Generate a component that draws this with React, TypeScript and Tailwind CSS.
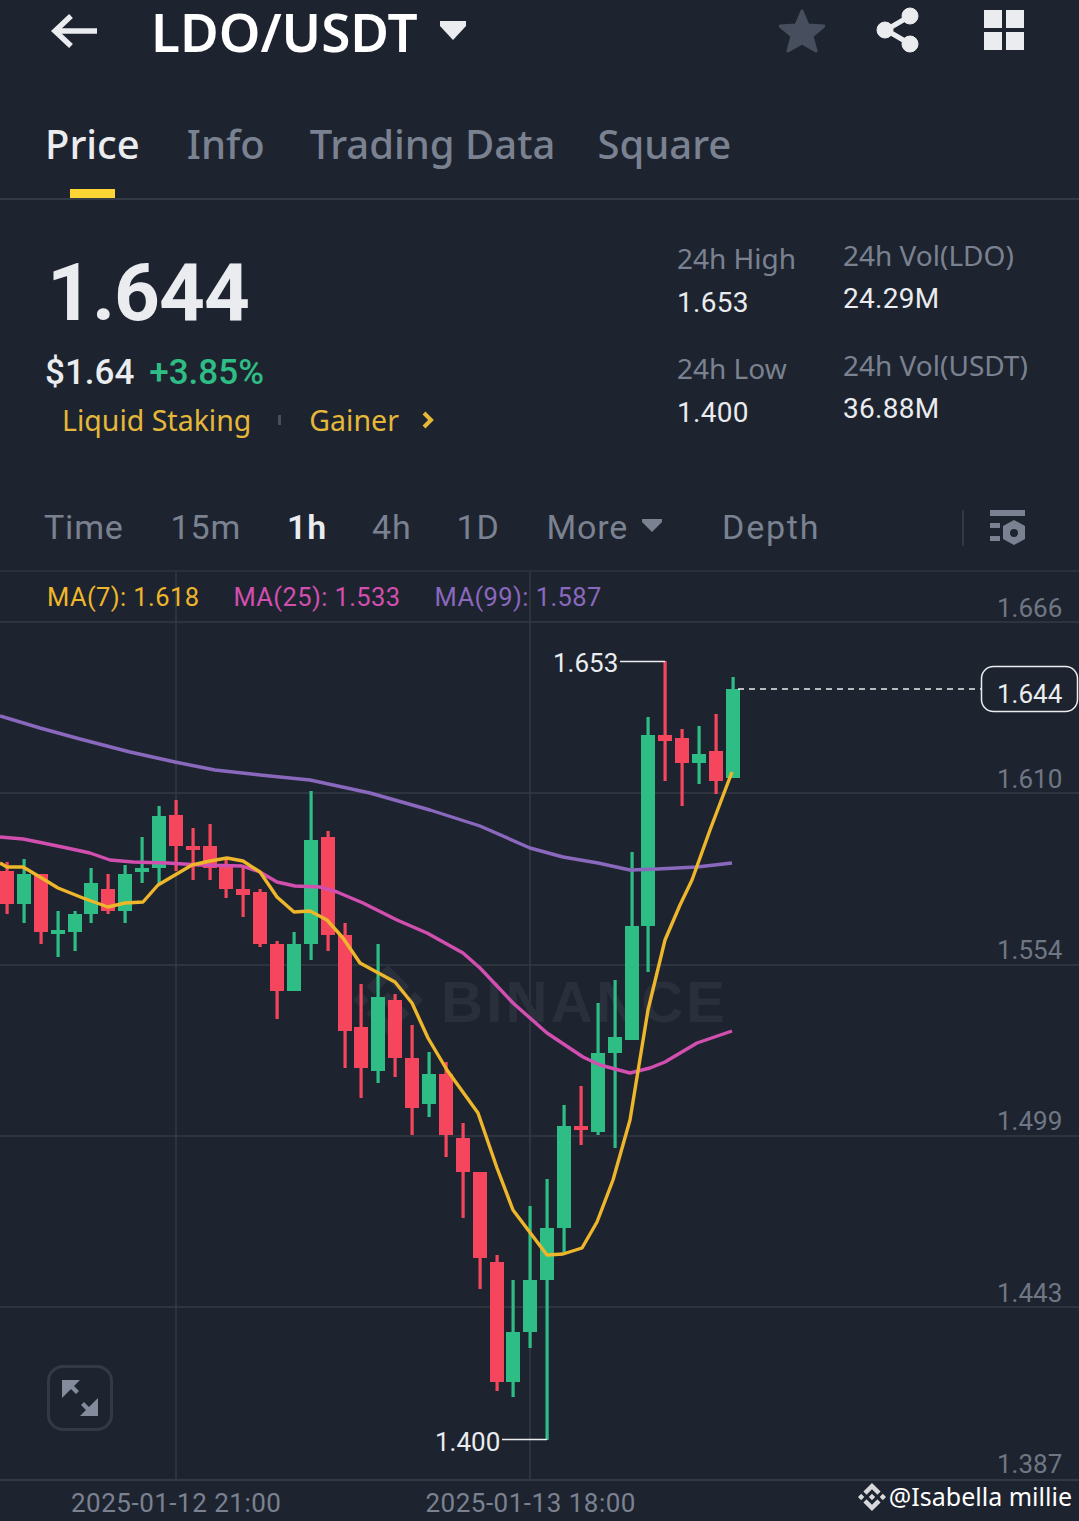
import React from 'react';
import { SiBinance } from 'react-icons/si';

const GREEN = '#2ebd85';
const RED = '#f6465d';

// [body top, body bottom, wick top, wick bottom, up?]
const candles: [number, number, number, number, boolean][] = [
  [871, 904, 862, 914, false],
  [874, 904, 859, 923, true],
  [874, 932, 874, 944, false],
  [930, 932, 911, 957, true],
  [914, 932, 911, 951, true],
  [883, 914, 868, 923, true],
  [889, 911, 874, 914, false],
  [874, 911, 865, 923, true],
  [868, 871, 837, 883, true],
  [816, 868, 806, 883, true],
  [815, 846, 800, 871, false],
  [846, 849, 828, 880, false],
  [846, 868, 824, 880, false],
  [865, 889, 858, 898, false],
  [889, 895, 865, 917, false],
  [892, 944, 889, 947, false],
  [944, 991, 941, 1019, false],
  [944, 991, 932, 991, true],
  [840, 944, 791, 960, true],
  [837, 935, 831, 951, false],
  [935, 1031, 923, 1068, false],
  [1027, 1068, 984, 1098, false],
  [997, 1071, 944, 1083, true],
  [1000, 1058, 994, 1077, false],
  [1058, 1108, 1025, 1135, false],
  [1074, 1104, 1052, 1117, true],
  [1074, 1135, 1062, 1157, false],
  [1138, 1172, 1123, 1218, false],
  [1172, 1258, 1172, 1289, false],
  [1262, 1382, 1255, 1391, false],
  [1332, 1382, 1280, 1397, true],
  [1280, 1332, 1206, 1348, true],
  [1228, 1280, 1179, 1440, true],
  [1126, 1228, 1105, 1252, true],
  [1126, 1130, 1086, 1145, false],
  [1053, 1132, 1003, 1135, true],
  [1037, 1053, 980, 1148, true],
  [926, 1040, 852, 1040, true],
  [735, 926, 717, 972, true],
  [735, 741, 661, 781, false],
  [738, 763, 729, 806, false],
  [754, 763, 726, 784, true],
  [751, 781, 714, 794, false],
  [689, 778, 677, 778, true],
];

const ma7 =
  '0,863 7,867 23,867 40,877 58,888 83,898 108,907 125,903 143,902 158,885 192,865 210,861 227,858 243,861 260,872 277,897 294,912 310,911 327,920 343,938 360,963 395,982 412,1003 428,1038 447,1070 478,1113 497,1168 513,1210 547,1255 563,1254 582,1248 597,1222 613,1180 630,1120 648,1010 665,940 680,905 692,880 710,830 732,772';
const ma25 =
  '0,837 23,839 43,843 67,848 90,853 110,860 133,862 167,863 200,865 242,866 260,872 277,882 295,886 320,887 337,892 363,903 397,920 427,933 463,953 480,968 513,1003 547,1033 583,1057 600,1065 630,1073 650,1068 665,1062 697,1043 732,1031';
const ma99 =
  '0,716 40,728 80,739 130,752 175,762 215,770 260,775 310,780 370,793 430,810 480,826 530,848 563,857 598,863 630,870 657,869 697,867 732,863';

const gridY = [622, 793, 965, 1136, 1307];
const axis: [string, number][] = [
  ['1.666', 617],
  ['1.610', 788],
  ['1.554', 959],
  ['1.499', 1130],
  ['1.443', 1302],
  ['1.387', 1473],
];

const Chart = () => (
  <svg className="absolute inset-0 w-[1079px] h-[907px]" viewBox="0 572 1079 907">
    {gridY.map(y => (
      <line key={y} x1="0" x2="1079" y1={y} y2={y} stroke="#333a45" strokeWidth="1.5" />
    ))}
    <line x1="176" x2="176" y1="572" y2="1480" stroke="#333a45" strokeWidth="1.5" />
    <line x1="530" x2="530" y1="572" y2="1480" stroke="#333a45" strokeWidth="1.5" />

    {/* watermark */}
    <SiBinance x="353" y="965" size={70} color="#2a303b" />
    <text x="441" y="1022" fill="#2a303b" fontSize="58" fontWeight="700" letterSpacing="3.3" fontFamily="'Liberation Sans', sans-serif">BINANCE</text>

    {candles.map(([top, bottom, wTop, wBottom, up], i) => {
      const x = Math.round(7 + i * 16.88);
      const color = up ? GREEN : RED;
      return (
        <g key={i} fill={color}>
          <rect x={x - 1.5} y={wTop} width="3.2" height={wBottom - wTop} />
          <rect x={x - 7} y={top} width="14" height={Math.max(bottom - top, 4)} />
        </g>
      );
    })}

    <polyline points={ma99} fill="none" stroke="#8a68bd" strokeWidth="3.4" strokeLinejoin="round" />
    <polyline points={ma25} fill="none" stroke="#d24fb0" strokeWidth="3.4" strokeLinejoin="round" />
    <polyline points={ma7} fill="none" stroke="#eeb62a" strokeWidth="3.4" strokeLinejoin="round" />

    {/* high, low, last price */}
    <path d="M620 661.5H665" stroke="#eaecef" strokeWidth="1.5" fill="none" />
    <path d="M502 1439.5H547" stroke="#eaecef" strokeWidth="1.5" fill="none" />
    <line x1="738" x2="981" y1="689" y2="689" stroke="#eaecef" strokeWidth="1.5" strokeDasharray="6 5" />
    <rect x="981.5" y="666.5" width="96" height="45" rx="12" fill="#1e242f" stroke="#eaecef" strokeWidth="1.5" />

    <g fontFamily="Roboto, sans-serif" fontSize="26">
      <text x="553" y="672" fill="#eaecef">1.653</text>
      <text x="435" y="1451" fill="#eaecef">1.400</text>
      <text x="997" y="703" fill="#eaecef">1.644</text>
      {axis.map(([label, y]) => (
        <text key={label} x="997" y={y} fill="#6f7785">{label}</text>
      ))}
    </g>
  </svg>
);

const Header = () => (
  <div className="h-[64px] flex items-center relative">
    <svg className="ml-[50px] w-[48px] h-[40px] -mt-[2px]" viewBox="0 0 48 40" fill="none" stroke="#eaecef" strokeWidth="5.5">
      <path d="M47 20H6" />
      <path d="M21 5L5 20l16 15" />
    </svg>
    <div className="ml-[53px] text-[53px] leading-[64px] font-semibold text-white">LDO/USDT</div>
    <svg className="ml-[21px] w-[28px] h-[22px] -mt-[4px]" viewBox="0 0 28 22" fill="#eaecef">
      <path d="M1 2h26v5L14 21 1 7z" strokeLinejoin="round" />
    </svg>
    <svg className="ml-auto w-[46px] h-[46px] mr-[51px] -mt-[2px]" viewBox="0 0 46 46" fill="#474f5e" stroke="#474f5e" strokeWidth="3" strokeLinejoin="round">
      <path d="M23 3l6 14 16 1-12 10 4 15-14-8-14 8 4-15L1 18l16-1z" />
    </svg>
    <svg className="w-[44px] h-[46px] -mt-[4px]" viewBox="0 0 44 46" fill="#eaecef" stroke="#eaecef">
      <path d="M34 9L10 23l24 14" fill="none" strokeWidth="5" />
      <circle cx="34" cy="9" r="8" />
      <circle cx="9" cy="23" r="8" />
      <circle cx="34" cy="37" r="8" />
    </svg>
    <div className="ml-[64px] mr-[55px] grid grid-cols-2 gap-[4px] -mt-[4px]">
      <div className="w-[18px] h-[18px] bg-[#eaecef]" />
      <div className="w-[18px] h-[18px] bg-[#eaecef]" />
      <div className="w-[18px] h-[18px] bg-[#eaecef]" />
      <div className="w-[18px] h-[18px] bg-[#eaecef]" />
    </div>
  </div>
);

const Tabs = () => (
  <div className="h-[136px] border-b-2 border-[#333a45] pl-[45px] flex gap-[47px] text-[40px] font-medium text-[#7a8291] pt-[50px] leading-[60px]">
    <div className="relative text-[#eaecef]">
      Price
      <div className="absolute left-[25px] top-[75px] w-[45px] h-[9px] bg-[#fcd535]" />
    </div>
    <div className="-mr-[2px]">Info</div>
    <div>Trading Data</div>
    <div className="-ml-[5px]">Square</div>
  </div>
);

const StatCol = ({ rows, className, gap }: { rows: [string, string][]; className: string; gap: string }) => (
  <div className={className}>
    {rows.map(([label, value]) => (
      <div key={label} className="h-[110px]">
        <div className="text-[28px] leading-[36px] text-[#7a8291]">{label}</div>
        <div className={`${gap} text-[28px] leading-[36px] text-[#eaecef] font-['Roboto'] tracking-[0.3px]`}>{value}</div>
      </div>
    ))}
  </div>
);

const Stats = () => (
  <div className="h-[290px] flex">
    <div className="w-[677px] pl-[45px]">
      <div className="mt-[45px] pl-[2px] text-[80px] leading-[96px] font-bold font-['Roboto'] text-[#eaecef] tracking-[-1px]">1.644</div>
      <div className="mt-[10px] flex items-baseline text-[35px] leading-[44px] font-['Roboto'] font-medium">
        <span className="text-[#eaecef]">$1.64</span>
        <span className="ml-[15px] text-[#2ebd85]">+3.85%</span>
      </div>
      <div className="flex items-center pl-[17px] mt-[3px] text-[28.5px] leading-[44px] text-[#e5b83a]">
        <span>Liquid Staking</span>
        <span className="ml-[27px] w-[3px] h-[10px] bg-[#474f5e]" />
        <span className="ml-[28px]">Gainer</span>
        <svg className="ml-[23px] w-[12px] h-[18px]" viewBox="0 0 12 18" fill="none" stroke="#e5b83a" strokeWidth="4">
          <path d="M2 2l7 7-7 7" />
        </svg>
      </div>
    </div>
    <StatCol className="w-[166px] pt-[40px]" gap="mt-[9px]" rows={[['24h High', '1.653'], ['24h Low', '1.400']]} />
    <StatCol className="pt-[37px]" gap="mt-[8px]" rows={[['24h Vol(LDO)', '24.29M'], ['24h Vol(USDT)', '36.88M']]} />
  </div>
);

const Intervals = () => (
  <div className="h-[82px] border-b-2 border-[#2b313c] flex items-center pl-[44px] pb-[5px] text-[34px] text-[#7a8291] font-['Roboto'] tracking-[0.8px]">
    <span>Time</span>
    <span className="ml-[47px]">15m</span>
    <span className="ml-[46px] text-[#eaecef] font-semibold">1h</span>
    <span className="ml-[45px]">4h</span>
    <span className="ml-[45px]">1D</span>
    <span className="ml-[47px]">More</span>
    <svg className="ml-[14px] w-[20px] h-[14px] -mt-[6px]" viewBox="0 0 20 14" fill="#7a8291">
      <path d="M0 1h20v3l-10 10L0 4z" />
    </svg>
    <span className="ml-[60px] tracking-[1.8px]">Depth</span>
    <div className="ml-auto w-[2px] h-[36px] bg-[#333a45]" />
    <svg className="ml-[25px] mr-[53px] w-[37px] h-[37px]" viewBox="0 0 37 37" fill="#7a8291">
      <path d="M1 1h35v6H1zM1 14h10v5H1zM1 27h10v5H1z" />
      <path fillRule="evenodd" d="M25 11l11 6v13l-11 6-11-6V17zm0 9a4 4 0 100 8 4 4 0 000-8z" />
    </svg>
  </div>
);

const Legend = () => (
  <div className="absolute left-[47px] top-[9px] flex gap-[34px] text-[25.5px] leading-[32px] font-['Roboto'] tracking-[0.4px]">
    <span className="text-[#eeb62a]">MA(7): 1.618</span>
    <span className="text-[#d24fb0]">MA(25): 1.533</span>
    <span className="text-[#8a68bd]">MA(99): 1.587</span>
  </div>
);

const ExpandButton = () => (
  <div className="absolute left-[47px] top-[793px] w-[66px] h-[66px] rounded-[16px] border-[3px] border-[#333a45] flex items-center justify-center">
    <svg className="w-[40px] h-[40px]" viewBox="0 0 40 40" fill="#838b9c">
      <path d="M2 2h18L2 20zM38 38H20l18-18z" />
      <path d="M9 9l7 7 3-3-7-7zM31 31l-7-7-3 3 7 7z" />
    </svg>
  </div>
);

const Footer = () => (
  <div className="h-[42px] flex items-center pl-[71px] pt-[5px] border-t-2 border-[#333a45] text-[26px] text-[#7a8291] font-['Roboto'] tracking-[0.5px]">
    <span>2025-01-12 21:00</span>
    <span className="ml-[144px]">2025-01-13 18:00</span>
    <div className="ml-auto mr-[7px] flex items-center gap-[3px] -mt-[13px] text-white text-[25px] font-normal font-['Noto_Sans'] tracking-normal">
      <SiBinance size={28} color="#d6d8dc" />
      <span>@Isabella millie</span>
    </div>
  </div>
);

export default function App() {
  return (
    <div className="w-[1079px] h-[1521px] bg-[#1e242f] overflow-hidden flex flex-col font-['Noto_Sans',sans-serif]">
      <Header />
      <Tabs />
      <Stats />
      <Intervals />
      <div className="relative h-[907px]">
        <Chart />
        <Legend />
        <ExpandButton />
      </div>
      <Footer />
    </div>
  );
}
